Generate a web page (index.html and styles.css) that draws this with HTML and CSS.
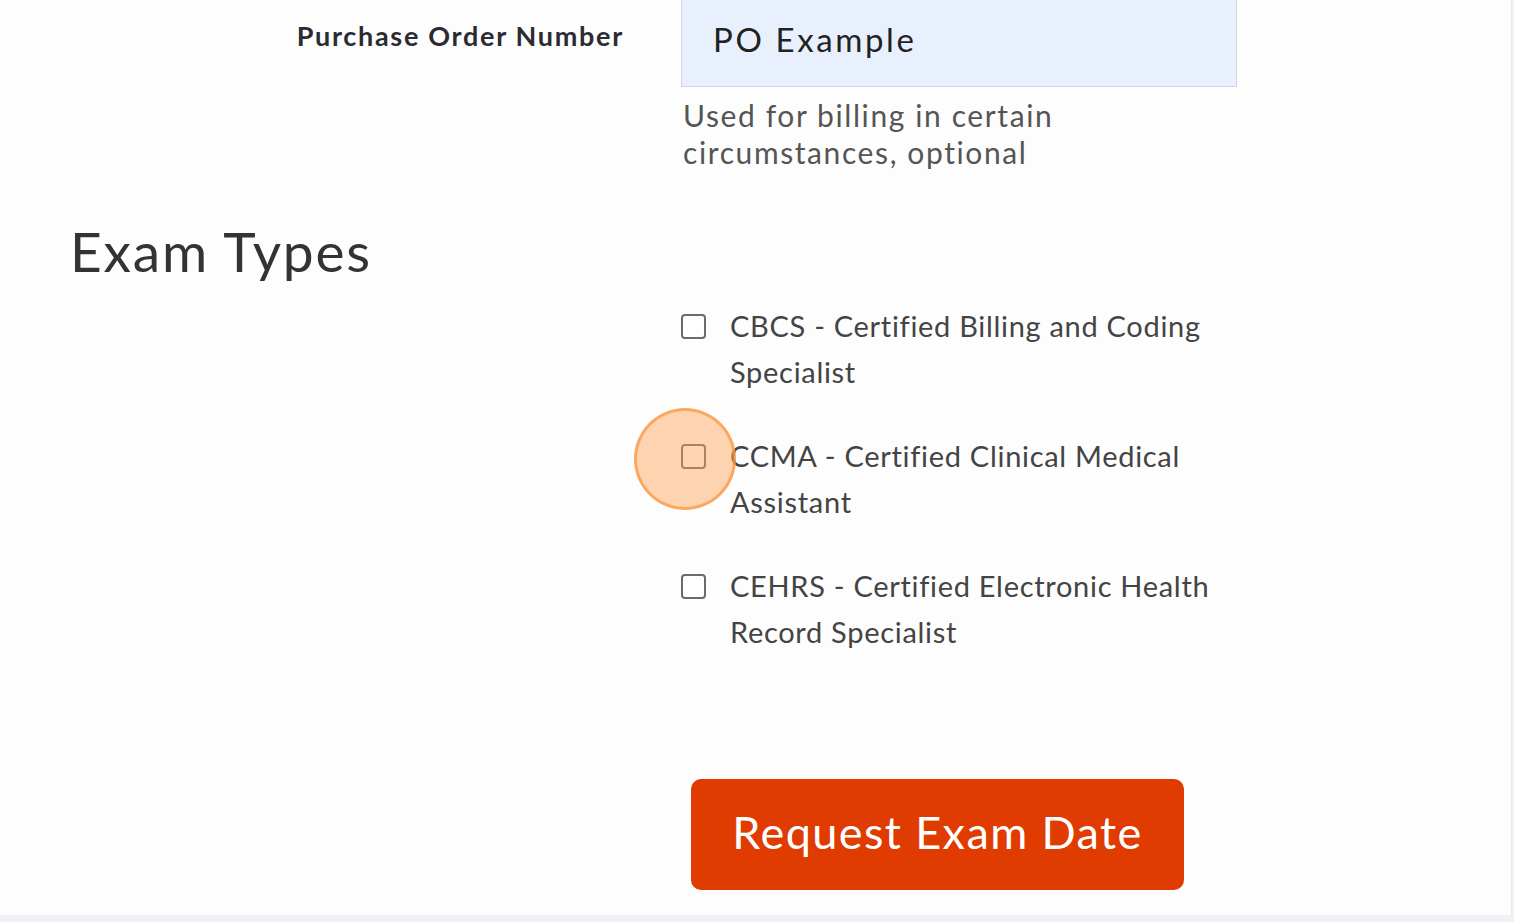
FILE: index.html
```html
<!DOCTYPE html>
<html lang="en">
<head>
    <meta charset="UTF-8">
    <meta name="viewport" content="width=device-width, initial-scale=1.0">
    <title>Request Exam Date</title>
    <link rel="stylesheet" href="styles.css">
</head>
<body>
    <div class="page-card">
        <form class="exam-form">
            <div class="form-row">
                <label class="field-label" for="poNumber">Purchase Order Number</label>
                <div class="field">
                    <input class="text-input" id="poNumber" type="text" value="PO Example">
                    <p class="field-help">Used for billing in certain circumstances, optional</p>
                </div>
            </div>

            <h2 class="section-title">Exam Types</h2>

            <div class="form-row">
                <div></div>
                <div class="check-list">
                    <label class="check-item">
                        <input type="checkbox" class="check-box">
                        <span>CBCS - Certified Billing and Coding Specialist</span>
                    </label>
                    <label class="check-item">
                        <span class="click-marker"></span>
                        <input type="checkbox" class="check-box">
                        <span>CCMA - Certified Clinical Medical Assistant</span>
                    </label>
                    <label class="check-item">
                        <input type="checkbox" class="check-box">
                        <span>CEHRS - Certified Electronic Health Record Specialist</span>
                    </label>
                </div>
            </div>

            <div class="form-row">
                <div></div>
                <div class="actions">
                    <button type="button" class="submit-btn">Request Exam Date</button>
                </div>
            </div>
        </form>
    </div>
</body>
</html>
```

FILE: styles.css
```css
* {
    margin: 0;
    padding: 0;
    box-sizing: border-box;
}

body {
    font-family: 'Lato', 'Liberation Sans', sans-serif;
    background: #eef1f6;
    color: #333;
    overflow: hidden;
}

.page-card {
    width: 1512px;
    height: 924px;
    margin-top: -9px;
    background: #fdfdfd;
    border-right: 1px solid #e6e9ee;
}

.exam-form {
    padding-left: 70px;
}

.form-row {
    display: grid;
    grid-template-columns: 554px 556px;
    column-gap: 57px;
}

.field-label {
    text-align: right;
    font-size: 27px;
    font-weight: 700;
    letter-spacing: 1.7px;
    color: #2b2c33;
    padding-top: 28px;
}

.text-input {
    display: block;
    width: 100%;
    height: 96px;
    padding: 0 31px;
    font-family: inherit;
    font-size: 33px;
    letter-spacing: 2.6px;
    color: #222;
    background: #e8f0fe;
    border: 1px solid #d3d7dd;
    outline: none;
}

.field-help {
    margin-top: 10px;
    padding-left: 2px;
    font-size: 30px;
    letter-spacing: 1.6px;
    line-height: 37px;
    color: #555;
    max-width: 420px;
}

.section-title {
    margin-top: 47px;
    font-size: 55px;
    font-weight: 400;
    letter-spacing: 1.8px;
    line-height: 66px;
    color: #333;
}

.check-list {
    margin-top: 19px;
    display: flex;
    flex-direction: column;
    gap: 38px;
}

.check-item {
    position: relative;
    display: flex;
    align-items: flex-start;
    gap: 24px;
    font-size: 29px;
    letter-spacing: 0.7px;
    line-height: 46px;
    color: #444;
    padding-right: 20px;
}

.check-box {
    appearance: none;
    flex: none;
    width: 25px;
    height: 25px;
    margin-top: 11px;
    border: 2px solid #6b6b6b;
    border-radius: 4px;
    background: #fff;
}

/* click indicator drawn over the second option */
.click-marker {
    position: absolute;
    left: -47px;
    top: -25px;
    width: 102px;
    height: 102px;
    border-radius: 50%;
    background: rgba(255, 160, 80, 0.45);
    border: 3px solid rgba(250, 150, 60, 0.7);
    pointer-events: none;
}

.actions {
    padding-top: 124px;
    padding-left: 10px;
}

.submit-btn {
    width: 493px;
    height: 111px;
    padding-bottom: 6px;
    background: #e03b00;
    color: #fff;
    border: none;
    border-radius: 10px;
    font-family: inherit;
    font-size: 45px;
    letter-spacing: 1.4px;
    cursor: pointer;
}
```
